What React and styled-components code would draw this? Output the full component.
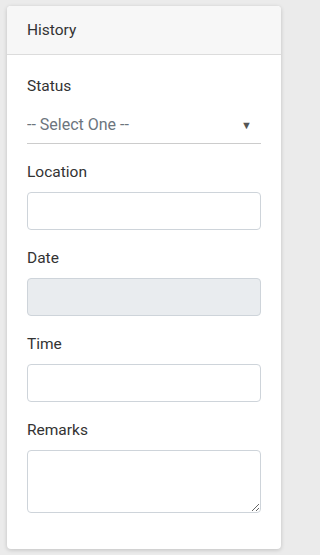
import React from 'react';
import styled, { createGlobalStyle } from 'styled-components';

const GlobalStyle = createGlobalStyle`
  html, body {
    margin: 0;
    padding: 0;
    background: #ebebeb;
  }
  body {
    font-family: Roboto, "Noto Sans", sans-serif;
    color: #333;
  }
  * {
    box-sizing: border-box;
  }
`;

const fields = [
  { label: 'Location', kind: 'input' },
  { label: 'Date', kind: 'input', disabled: true },
  { label: 'Time', kind: 'input' },
  { label: 'Remarks', kind: 'textarea' },
];

const App = () => {
  return (
    <>
      <GlobalStyle />
      <Page>
        <Card>
          <CardHeader>History</CardHeader>
          <CardBody>
            <Group>
              <Label>Status</Label>
              <SelectWrap>
                <Select defaultValue="">
                  <option value="">-- Select One --</option>
                  <option value="pending">Pending</option>
                  <option value="done">Done</option>
                </Select>
                <Caret>▼</Caret>
              </SelectWrap>
            </Group>
            {fields.map(field => (
              <Group key={field.label}>
                <Label>{field.label}</Label>
                {field.kind === 'textarea' ? (
                  <TextArea />
                ) : (
                  <Input disabled={field.disabled} />
                )}
              </Group>
            ))}
          </CardBody>
        </Card>
      </Page>
    </>
  );
};

export default App;

const Page = styled.div`
  width: 291px;
  padding: 6px 10px 7px 7px;
`;

const Card = styled.div`
  background: #fff;
  border-radius: 4px;
  box-shadow: 0 1px 4px rgba(0, 0, 0, 0.18);
  overflow: hidden;
`;

const CardHeader = styled.div`
  height: 49px;
  padding: 0 20px;
  display: flex;
  align-items: center;
  background: #f7f7f7;
  border-bottom: 1px solid #dcdcdc;
  font-size: 15.5px;
  color: #333;
`;

const CardBody = styled.div`
  padding: 20px 20px 19px;
`;

const Group = styled.div`
  margin-bottom: 17px;
`;

const Label = styled.div`
  font-size: 15.5px;
  line-height: 22px;
  color: #333;
  margin-bottom: 9px;
`;

const SelectWrap = styled.div`
  position: relative;
`;

const Select = styled.select`
  appearance: none;
  width: 100%;
  height: 38px;
  padding: 0 24px 0 0;
  border: 0;
  border-bottom: 1px solid #ccc;
  border-radius: 0;
  background: transparent;
  font-family: Roboto, "Noto Sans", sans-serif;
  font-size: 16px;
  color: #6c757d;
  outline: none;
`;

const Caret = styled.span`
  position: absolute;
  right: 9px;
  top: 50%;
  transform: translateY(-50%);
  font-size: 11px;
  color: #555;
  pointer-events: none;
`;

const Input = styled.input`
  display: block;
  width: 100%;
  height: 38px;
  padding: 6px 12px;
  border: 1px solid #ced4da;
  border-radius: 4px;
  background: ${props => (props.disabled ? '#e9ecef' : '#fff')};
  font-family: Roboto, "Noto Sans", sans-serif;
  font-size: 15px;
  color: #495057;
  outline: none;
`;

const TextArea = styled.textarea`
  display: block;
  width: 100%;
  height: 63px;
  padding: 6px 12px;
  border: 1px solid #ced4da;
  border-radius: 4px;
  background: #fff;
  font-family: Roboto, "Noto Sans", sans-serif;
  font-size: 15px;
  color: #495057;
  outline: none;
`;
